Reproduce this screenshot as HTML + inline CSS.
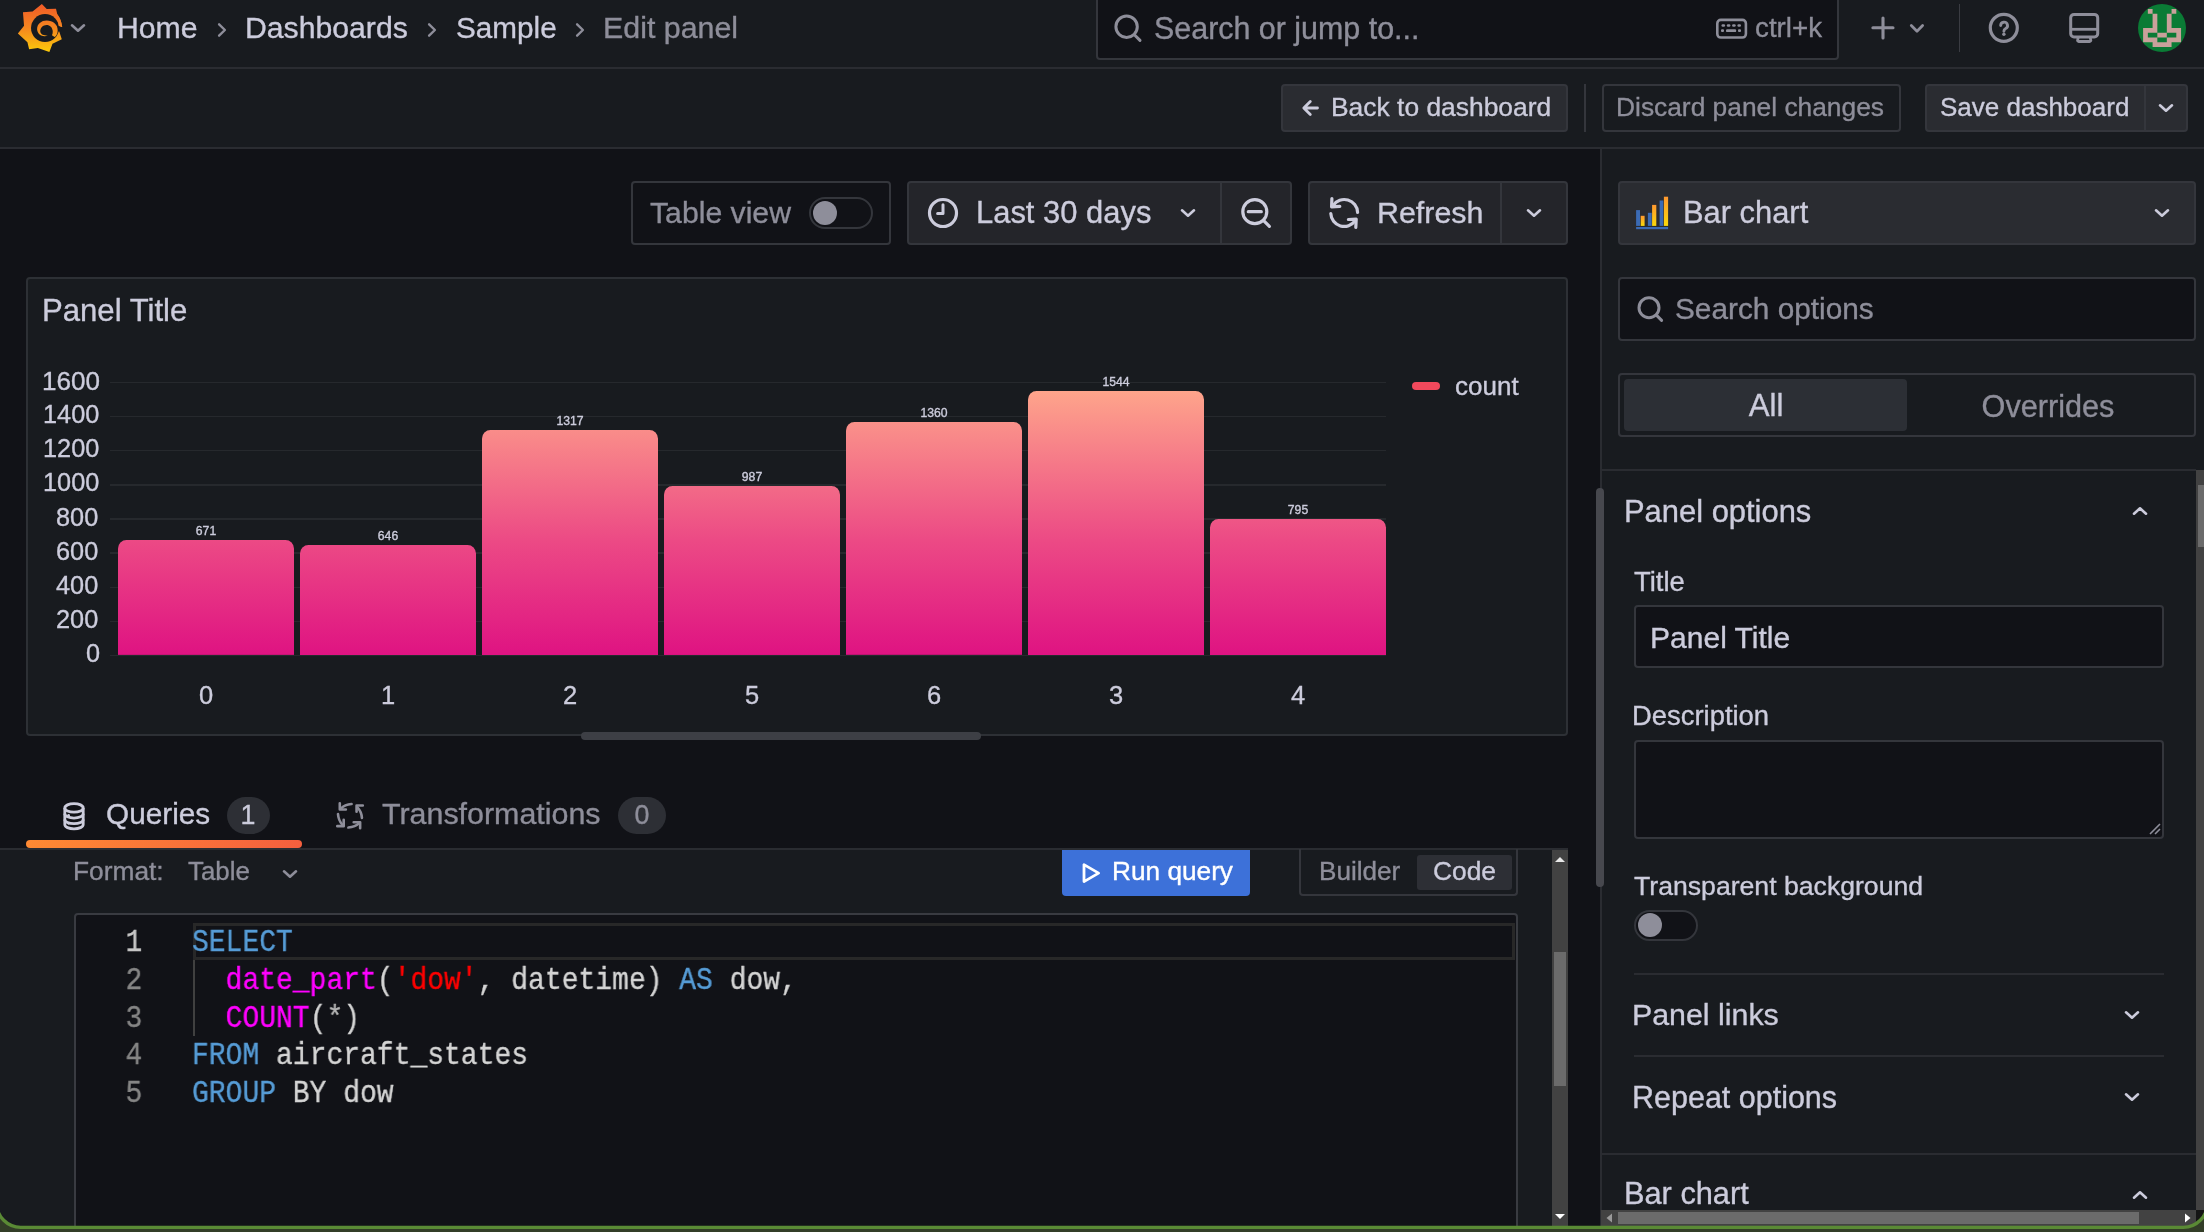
<!DOCTYPE html>
<html><head><meta charset="utf-8"><title>Edit panel - Grafana</title>
<style>
html,body{margin:0;padding:0;}
body{width:2204px;height:1232px;overflow:hidden;position:relative;background:#111217;font-family:'Liberation Sans', sans-serif;}
.a{position:absolute;box-sizing:border-box;}
.t{position:absolute;line-height:1;white-space:pre;-webkit-text-stroke:0.35px currentColor;will-change:transform;}
</style></head><body>
<div class="a" style="left:0px;top:0px;width:2204px;height:68px;background:#181b1f;"></div>
<div class="a" style="left:0px;top:66.5px;width:2204px;height:2.0px;background:#2a2c31;"></div>
<div class="a" style="left:0px;top:68.5px;width:2204px;height:79.0px;background:#181b1f;"></div>
<div class="a" style="left:0px;top:147px;width:2204px;height:2px;background:#2a2c31;"></div>
<div class="a" style="left:0px;top:149px;width:1600px;height:1077px;background:#111217;"></div>
<div class="a" style="left:1601px;top:149px;width:603px;height:1077px;background:#181b1f;"></div>
<div class="a" style="left:1600px;top:149px;width:2px;height:1077px;background:#2a2c31;"></div>
<div class="a" style="left:1096px;top:-6px;width:743px;height:66px;background:#111217;border:2px solid #34363c;border-radius:4px;"></div>
<div class="t" style="top:12.54px;font-size:30.43px;color:#8e8e9a;left:1154.00px;">Search or jump to...</div>
<div class="t" style="top:13.50px;font-size:27.76px;color:#8e8e9a;left:1755.00px;">ctrl+k</div>
<div class="t" style="top:12.72px;font-size:30.21px;color:#ccccdc;left:117.00px;">Home</div>
<div class="t" style="top:12.53px;font-size:30.20px;color:#ccccdc;left:244.60px;">Dashboards</div>
<div class="t" style="top:13.16px;font-size:29.69px;color:#ccccdc;left:455.80px;">Sample</div>
<div class="t" style="top:12.37px;font-size:30.39px;color:#8e8e9a;left:602.80px;">Edit panel</div>
<svg class="a" style="left:211.8px;top:19.9px;" width="20" height="20" viewBox="0 0 20 20"><polyline points="7.1,4.3 12.9,10 7.1,15.7" fill="none" stroke="#8e8e9a" stroke-width="2.4" stroke-linecap="round" stroke-linejoin="round"/></svg>
<svg class="a" style="left:421.8px;top:19.9px;" width="20" height="20" viewBox="0 0 20 20"><polyline points="7.1,4.3 12.9,10 7.1,15.7" fill="none" stroke="#8e8e9a" stroke-width="2.4" stroke-linecap="round" stroke-linejoin="round"/></svg>
<svg class="a" style="left:570px;top:19.9px;" width="20" height="20" viewBox="0 0 20 20"><polyline points="7.1,4.3 12.9,10 7.1,15.7" fill="none" stroke="#8e8e9a" stroke-width="2.4" stroke-linecap="round" stroke-linejoin="round"/></svg>
<svg class="a" style="left:70.0px;top:20.0px;" width="16" height="16" viewBox="0 0 16 16"><polyline points="2,5.300000000000001 8.0,10.7 14,5.300000000000001" fill="none" stroke="#8e8e9a" stroke-width="2.6" stroke-linecap="round" stroke-linejoin="round"/></svg>
<div class="a" style="left:1281px;top:84px;width:287px;height:48px;background:#2a2c31;border:2px solid #34363c;border-radius:4px;"></div>
<div class="t" style="top:94.43px;font-size:26.42px;color:#ccccdc;left:1331.00px;">Back to dashboard</div>
<div class="a" style="left:1584px;top:84px;width:2px;height:48px;background:#34363c;"></div>
<div class="a" style="left:1602px;top:84px;width:299px;height:48px;border:2px solid #34363c;border-radius:4px;"></div>
<div class="t" style="top:93.59px;font-size:26.35px;color:#8e8e9a;left:1616.00px;">Discard panel changes</div>
<div class="a" style="left:1925px;top:84px;width:263px;height:48px;background:#2a2c31;border:2px solid #34363c;border-radius:4px;"></div>
<div class="a" style="left:2144px;top:84px;width:2px;height:48px;background:#34363c;"></div>
<div class="t" style="top:93.68px;font-size:26.01px;color:#ccccdc;left:1940.00px;">Save dashboard</div>
<svg class="a" style="left:2158.0px;top:100.0px;" width="16" height="16" viewBox="0 0 16 16"><polyline points="2,5.300000000000001 8.0,10.7 14,5.300000000000001" fill="none" stroke="#ccccdc" stroke-width="2.6" stroke-linecap="round" stroke-linejoin="round"/></svg>
<div class="a" style="left:631px;top:181px;width:260px;height:64px;background:#111217;border:2px solid #34363c;border-radius:4px;"></div>
<div class="t" style="top:197.83px;font-size:30.20px;color:#8e8e9a;left:650.00px;">Table view</div>
<div class="a" style="left:809px;top:197px;width:64px;height:32px;background:#111217;border:2px solid #34363c;border-radius:16px;"></div>
<div class="a" style="left:813px;top:201px;width:24px;height:24px;background:#8e8e9a;border-radius:12px;"></div>
<div class="a" style="left:907px;top:181px;width:385px;height:64px;background:#24252a;border:2px solid #34363c;border-radius:4px;"></div>
<div class="a" style="left:1220px;top:181px;width:2px;height:64px;background:#34363c;"></div>
<div class="t" style="top:198.21px;font-size:30.93px;color:#ccccdc;left:976.00px;">Last 30 days</div>
<svg class="a" style="left:1180.0px;top:205.0px;" width="16" height="16" viewBox="0 0 16 16"><polyline points="2,5.300000000000001 8.0,10.7 14,5.300000000000001" fill="none" stroke="#ccccdc" stroke-width="2.6" stroke-linecap="round" stroke-linejoin="round"/></svg>
<div class="a" style="left:1308px;top:181px;width:260px;height:64px;background:#24252a;border:2px solid #34363c;border-radius:4px;"></div>
<div class="a" style="left:1500px;top:181px;width:2px;height:64px;background:#34363c;"></div>
<div class="t" style="top:197.46px;font-size:30.40px;color:#ccccdc;left:1377.00px;">Refresh</div>
<svg class="a" style="left:1526.0px;top:205.0px;" width="16" height="16" viewBox="0 0 16 16"><polyline points="2,5.300000000000001 8.0,10.7 14,5.300000000000001" fill="none" stroke="#ccccdc" stroke-width="2.6" stroke-linecap="round" stroke-linejoin="round"/></svg>
<div class="a" style="left:26px;top:277px;width:1542px;height:459px;background:#181b1f;border:2px solid #2d3035;border-radius:4px;"></div>
<div class="t" style="top:295.06px;font-size:31.11px;color:#ccccdc;left:42.00px;">Panel Title</div>
<div class="a" style="left:1618px;top:181px;width:578px;height:64px;background:#2a2c31;border:2px solid #34363c;border-radius:4px;"></div>
<div class="t" style="top:198.47px;font-size:30.86px;color:#ccccdc;left:1682.60px;">Bar chart</div>
<svg class="a" style="left:2154.0px;top:205.0px;" width="16" height="16" viewBox="0 0 16 16"><polyline points="2,5.300000000000001 8.0,10.7 14,5.300000000000001" fill="none" stroke="#ccccdc" stroke-width="2.6" stroke-linecap="round" stroke-linejoin="round"/></svg>
<div class="a" style="left:1618px;top:277px;width:578px;height:64px;background:#111217;border:2px solid #34363c;border-radius:4px;"></div>
<div class="t" style="top:293.78px;font-size:29.79px;color:#8e8e9a;left:1675.00px;">Search options</div>
<div class="a" style="left:1618px;top:373px;width:578px;height:64px;border:2px solid #34363c;border-radius:4px;"></div>
<div class="a" style="left:1624px;top:379px;width:283px;height:52px;background:#2c2f35;border-radius:4px;"></div>
<div class="t" style="top:389.57px;font-size:31.21px;color:#ccccdc;left:1465.50px;width:600px;text-align:center;">All</div>
<div class="t" style="top:391.04px;font-size:30.66px;color:#8e8e9a;left:1748.20px;width:600px;text-align:center;">Overrides</div>
<svg class="a" style="left:14px;top:2px;" width="52" height="52" viewBox="0 0 1232 1232"><defs><linearGradient id="lg" gradientUnits="userSpaceOnUse" x1="0" y1="50" x2="0" y2="1180"><stop offset="0" stop-color="#f05a28"/><stop offset="0.5" stop-color="#f5861f"/><stop offset="1" stop-color="#fbca0a"/></linearGradient></defs>
<path fill="url(#lg)" d="M660,48 L775,168 L995,162 L1025,290 Q1120,410 1142,595 L1072,700 L1132,882 L912,992 L838,1182 L565,1092 L358,1122 L318,952 L92,748 L238,560 L212,240 L440,224 Z"/>
<circle cx="735" cy="618" r="332" fill="#181b1f"/>
<path fill="#181b1f" d="M1050,560 L1150,600 L1140,640 L1075,705 L1030,690 Z"/>
<path fill="url(#lg)" d="M1142,595 Q1120,410 1025,290 L1000,310 Q1040,420 1060,560 Z"/>
<path fill="url(#lg)" d="M805,790 C700,850 560,780 548,660 C540,520 650,440 775,440 C920,440 1040,530 1035,680 C1032,760 1000,810 960,830 L900,790 C915,760 920,725 918,690 C912,600 850,542 770,542 C690,542 622,610 622,690 C622,760 700,810 805,790 Z"/></svg>
<svg class="a" style="left:1714px;top:16px;" width="34" height="24" viewBox="0 0 34 24"><rect x="3.3" y="3.9" width="28.6" height="17.6" rx="3.5" fill="none" stroke="#8e8e9a" stroke-width="2.6"/>
<rect x="7.5" y="8.2" width="3.6" height="2.6" rx="1.2" fill="#8e8e9a"/><rect x="12.8" y="8.2" width="3.6" height="2.6" rx="1.2" fill="#8e8e9a"/>
<rect x="18.1" y="8.2" width="3.6" height="2.6" rx="1.2" fill="#8e8e9a"/><rect x="23.4" y="8.2" width="3.6" height="2.6" rx="1.2" fill="#8e8e9a"/>
<rect x="7" y="13.3" width="3" height="2.7" rx="1" fill="#8e8e9a"/><rect x="12" y="13.2" width="10.2" height="2.9" rx="1.2" fill="#8e8e9a"/><rect x="24" y="13.3" width="3" height="2.7" rx="1" fill="#8e8e9a"/></svg>
<svg class="a" style="left:1868px;top:13px;" width="30" height="30" viewBox="0 0 30 30"><path d="M15 5 V24.9 M4.9 14.8 H25" stroke="#8e8e9a" stroke-width="3.1" stroke-linecap="round"/></svg>
<svg class="a" style="left:1906px;top:20px;" width="22" height="16" viewBox="0 0 22 16"><polyline points="5.3,5.6 11,11.2 16.6,5.6" fill="none" stroke="#8e8e9a" stroke-width="2.8" stroke-linecap="round" stroke-linejoin="round"/></svg>
<div class="a" style="left:1958.7px;top:4.3px;width:1.599999999999909px;height:47.7px;background:#3a3c42;"></div>
<svg class="a" style="left:1984px;top:8px;" width="40" height="40" viewBox="0 0 40 40"><circle cx="19.8" cy="19.8" r="13.5" fill="none" stroke="#8e8e9a" stroke-width="3.2"/>
<path d="M16.7 17.6 A3.4 3.4 0 1 1 21.4 20.7 Q19.9 21.4 19.9 23.2" fill="none" stroke="#8e8e9a" stroke-width="2.9" stroke-linecap="round"/>
<circle cx="19.9" cy="26.3" r="1.7" fill="#8e8e9a"/></svg>
<svg class="a" style="left:2064px;top:8px;" width="40" height="40" viewBox="0 0 40 40"><rect x="6.7" y="6.4" width="27" height="22.6" rx="3.3" fill="none" stroke="#8e8e9a" stroke-width="3"/>
<path d="M6.5 21.3 H33.8" stroke="#8e8e9a" stroke-width="2.8"/>
<path d="M14.4 29 L13.6 31.9 A1.2 1.2 0 0 0 14.8 33.5 H25.6 A1.2 1.2 0 0 0 26.8 31.9 L26 29" fill="none" stroke="#8e8e9a" stroke-width="2.8" stroke-linejoin="round"/></svg>
<svg class="a" style="left:2138px;top:4px;" width="48" height="48" viewBox="0 0 48 48"><circle cx="24" cy="24" r="24" fill="#0a7b35"/><path fill="#c9a19b" d="M9.845 5.100h4.745v4.745h-4.745zM33.570 5.100h4.745v4.745h-4.745zM14.590 9.845h4.745v4.745h-4.745zM28.825 9.845h4.745v4.745h-4.745zM14.590 14.590h4.745v4.745h-4.745zM28.825 14.590h4.745v4.745h-4.745zM14.590 19.335h4.745v4.745h-4.745zM28.825 19.335h4.745v4.745h-4.745zM5.100 24.080h4.745v4.745h-4.745zM9.845 24.080h4.745v4.745h-4.745zM14.590 24.080h4.745v4.745h-4.745zM28.825 24.080h4.745v4.745h-4.745zM33.570 24.080h4.745v4.745h-4.745zM38.315 24.080h4.745v4.745h-4.745zM5.100 28.825h4.745v4.745h-4.745zM19.335 28.825h4.745v4.745h-4.745zM24.080 28.825h4.745v4.745h-4.745zM38.315 28.825h4.745v4.745h-4.745zM5.100 33.570h4.745v4.745h-4.745zM9.845 33.570h4.745v4.745h-4.745zM14.590 33.570h4.745v4.745h-4.745zM28.825 33.570h4.745v4.745h-4.745zM33.570 33.570h4.745v4.745h-4.745zM38.315 33.570h4.745v4.745h-4.745zM14.590 38.315h4.745v4.745h-4.745zM19.335 38.315h4.745v4.745h-4.745zM24.080 38.315h4.745v4.745h-4.745zM28.825 38.315h4.745v4.745h-4.745z"/></svg>
<svg class="a" style="left:1110px;top:10px;" width="36" height="36" viewBox="0 0 36 36"><circle cx="16.6" cy="16.7" r="10.7" fill="none" stroke="#8e8e9a" stroke-width="3"/><path d="M24.6 25 L30 30.4" stroke="#8e8e9a" stroke-width="3" stroke-linecap="round"/></svg>
<svg class="a" style="left:1298px;top:96px;" width="26" height="24" viewBox="0 0 26 24"><path d="M19.5 12 H6.5 M12.3 5.5 L5.8 12 L12.3 18.5" fill="none" stroke="#ccccdc" stroke-width="2.8" stroke-linecap="round" stroke-linejoin="round"/></svg>
<svg class="a" style="left:923px;top:193px;" width="40" height="40" viewBox="0 0 40 40"><circle cx="20" cy="20" r="13.5" fill="none" stroke="#ccccdc" stroke-width="3.2"/><path d="M20 11.7 V20.6 H14.6" fill="none" stroke="#ccccdc" stroke-width="3" stroke-linecap="round" stroke-linejoin="round"/></svg>
<svg class="a" style="left:1235px;top:192px;" width="40" height="40" viewBox="0 0 40 40"><circle cx="19.8" cy="19.7" r="12" fill="none" stroke="#ccccdc" stroke-width="3.2"/><path d="M28.4 28.4 L34.4 34.4" stroke="#ccccdc" stroke-width="3.2" stroke-linecap="round"/><path d="M13.3 19.7 H26.3" stroke="#ccccdc" stroke-width="3.2" stroke-linecap="round"/></svg>
<svg class="a" style="left:1324px;top:193px;" width="40" height="40" viewBox="0 0 40 40"><path d="M9.2 12.3 A13.4 13.4 0 0 1 33.6 19.3" fill="none" stroke="#ccccdc" stroke-width="3.2" stroke-linecap="round"/>
<path d="M6.8 20.5 A13.4 13.4 0 0 0 31.2 27.7" fill="none" stroke="#ccccdc" stroke-width="3.2" stroke-linecap="round"/>
<path d="M7.9 5.6 L7.6 13.8 L15.8 13.4" fill="none" stroke="#ccccdc" stroke-width="3.2" stroke-linecap="round" stroke-linejoin="round"/>
<path d="M24.4 26.5 L32.2 26.1 L31.8 34.3" fill="none" stroke="#ccccdc" stroke-width="3.2" stroke-linecap="round" stroke-linejoin="round"/></svg>
<div class="a" style="left:110px;top:654.85px;width:1276px;height:1.2999999999999545px;background:#26292d;"></div>
<div class="t" style="top:640.58px;font-size:25.30px;color:#ccccdc;right:2104.20px;text-align:right;">0</div>
<div class="a" style="left:110px;top:620.725px;width:1276px;height:1.2999999999999545px;background:#26292d;"></div>
<div class="t" style="top:607.33px;font-size:25.30px;color:#ccccdc;right:2105.60px;text-align:right;">200</div>
<div class="a" style="left:110px;top:586.6px;width:1276px;height:1.2999999999999545px;background:#26292d;"></div>
<div class="t" style="top:573.08px;font-size:25.30px;color:#ccccdc;right:2105.60px;text-align:right;">400</div>
<div class="a" style="left:110px;top:552.475px;width:1276px;height:1.2999999999999545px;background:#26292d;"></div>
<div class="t" style="top:538.83px;font-size:25.30px;color:#ccccdc;right:2105.60px;text-align:right;">600</div>
<div class="a" style="left:110px;top:518.35px;width:1276px;height:1.2999999999999545px;background:#26292d;"></div>
<div class="t" style="top:504.58px;font-size:25.30px;color:#ccccdc;right:2105.60px;text-align:right;">800</div>
<div class="a" style="left:110px;top:484.225px;width:1276px;height:1.2999999999999545px;background:#26292d;"></div>
<div class="t" style="top:469.95px;font-size:25.30px;color:#ccccdc;right:2104.80px;text-align:right;">1000</div>
<div class="a" style="left:110px;top:450.1px;width:1276px;height:1.2999999999999545px;background:#26292d;"></div>
<div class="t" style="top:435.83px;font-size:25.30px;color:#ccccdc;right:2104.80px;text-align:right;">1200</div>
<div class="a" style="left:110px;top:415.975px;width:1276px;height:1.2999999999999545px;background:#26292d;"></div>
<div class="t" style="top:401.70px;font-size:25.30px;color:#ccccdc;right:2104.80px;text-align:right;">1400</div>
<div class="a" style="left:110px;top:381.85px;width:1276px;height:1.2999999999999545px;background:#26292d;"></div>
<div class="t" style="top:367.94px;font-size:26.06px;color:#ccccdc;right:2104.20px;text-align:right;">1600</div>
<div class="a" style="left:118px;top:540.4248px;width:176px;height:114.87519999999995px;border-radius:8.5px 8.5px 0 0;background:linear-gradient(to top,#df1382 0px,#ec4a85 115px,#fea48b 264px);background-size:100% 114.88px;background-position:bottom;"></div>
<div class="t" style="top:524.90px;font-size:12.20px;color:#ccccdc;left:-94.00px;width:600px;text-align:center;">671</div>
<div class="t" style="top:683.01px;font-size:25.50px;color:#ccccdc;left:-94.50px;width:600px;text-align:center;">0</div>
<div class="a" style="left:300px;top:544.7048px;width:176px;height:110.59519999999998px;border-radius:8.5px 8.5px 0 0;background:linear-gradient(to top,#df1382 0px,#ec4a85 115px,#fea48b 264px);background-size:100% 110.60px;background-position:bottom;"></div>
<div class="t" style="top:529.68px;font-size:12.20px;color:#ccccdc;left:88.00px;width:600px;text-align:center;">646</div>
<div class="t" style="top:683.01px;font-size:25.50px;color:#ccccdc;left:87.50px;width:600px;text-align:center;">1</div>
<div class="a" style="left:482px;top:429.82959999999997px;width:176px;height:225.47039999999998px;border-radius:8.5px 8.5px 0 0;background:linear-gradient(to top,#df1382 0px,#ec4a85 115px,#fea48b 264px);background-size:100% 225.47px;background-position:bottom;"></div>
<div class="t" style="top:414.93px;font-size:12.20px;color:#ccccdc;left:270.00px;width:600px;text-align:center;">1317</div>
<div class="t" style="top:683.01px;font-size:25.50px;color:#ccccdc;left:270.00px;width:600px;text-align:center;">2</div>
<div class="a" style="left:664px;top:486.32559999999995px;width:176px;height:168.9744px;border-radius:8.5px 8.5px 0 0;background:linear-gradient(to top,#df1382 0px,#ec4a85 115px,#fea48b 264px);background-size:100% 168.97px;background-position:bottom;"></div>
<div class="t" style="top:470.80px;font-size:12.20px;color:#ccccdc;left:452.00px;width:600px;text-align:center;">987</div>
<div class="t" style="top:683.01px;font-size:25.50px;color:#ccccdc;left:452.00px;width:600px;text-align:center;">5</div>
<div class="a" style="left:846px;top:422.46799999999996px;width:176px;height:232.832px;border-radius:8.5px 8.5px 0 0;background:linear-gradient(to top,#df1382 0px,#ec4a85 115px,#fea48b 264px);background-size:100% 232.83px;background-position:bottom;"></div>
<div class="t" style="top:406.94px;font-size:12.20px;color:#ccccdc;left:634.00px;width:600px;text-align:center;">1360</div>
<div class="t" style="top:683.01px;font-size:25.50px;color:#ccccdc;left:634.00px;width:600px;text-align:center;">6</div>
<div class="a" style="left:1028px;top:390.9672px;width:176px;height:264.33279999999996px;border-radius:8.5px 8.5px 0 0;background:linear-gradient(to top,#df1382 0px,#ec4a85 115px,#fea48b 264px);background-size:100% 264.33px;background-position:bottom;"></div>
<div class="t" style="top:376.20px;font-size:12.20px;color:#ccccdc;left:815.50px;width:600px;text-align:center;">1544</div>
<div class="t" style="top:683.01px;font-size:25.50px;color:#ccccdc;left:816.00px;width:600px;text-align:center;">3</div>
<div class="a" style="left:1210px;top:519.1959999999999px;width:176px;height:136.10400000000004px;border-radius:8.5px 8.5px 0 0;background:linear-gradient(to top,#df1382 0px,#ec4a85 115px,#fea48b 264px);background-size:100% 136.10px;background-position:bottom;"></div>
<div class="t" style="top:503.67px;font-size:12.20px;color:#ccccdc;left:998.00px;width:600px;text-align:center;">795</div>
<div class="t" style="top:683.01px;font-size:25.50px;color:#ccccdc;left:998.00px;width:600px;text-align:center;">4</div>
<div class="a" style="left:1412px;top:382px;width:28px;height:8px;background:#f2495c;border-radius:4px;"></div>
<div class="t" style="top:372.99px;font-size:26.00px;color:#ccccdc;left:1455.00px;">count</div>
<div class="a" style="left:581px;top:732px;width:400px;height:8px;background:#3d3f45;border-radius:4px;"></div>
<svg class="a" style="left:56px;top:794px;" width="44" height="44" viewBox="0 0 44 44"><g fill="none" stroke="#ccccdc" stroke-width="2.8">
<ellipse cx="18" cy="13.9" rx="9.2" ry="4.3"/>
<path d="M8.8 13.9 V30.6 A9.2 4.3 0 0 0 27.2 30.6 V13.9"/>
<path d="M8.8 19.8 A9.2 4.3 0 0 0 27.2 19.8"/>
<path d="M8.8 25.4 A9.2 4.3 0 0 0 27.2 25.4"/>
</g><circle cx="12.6" cy="21.4" r="1.4" fill="#ccccdc"/><circle cx="12.6" cy="29.3" r="1.4" fill="#ccccdc"/></svg>
<div class="t" style="top:798.80px;font-size:29.76px;color:#ccccdc;left:106.00px;">Queries</div>
<div class="a" style="left:227px;top:797px;width:43px;height:37px;background:#2d2f35;border-radius:18.5px;"></div>
<div class="t" style="top:801.51px;font-size:26.80px;color:#ccccdc;left:-52.50px;width:600px;text-align:center;">1</div>
<svg class="a" style="left:328px;top:794px;" width="44" height="44" viewBox="0 0 44 44"><g fill="none" stroke="#8e8e9a" stroke-width="2.6" stroke-linecap="round" stroke-linejoin="round">
<path d="M23.57 10.00 Q16.79 10.36 12.86 14.64"/><path d="M11.79 9.29 L11.79 15.54 L17.86 15.54"/>
<path d="M33.93 23.93 Q33.57 17.86 29.64 13.57"/><path d="M34.82 11.43 L28.57 11.43 L28.57 17.68"/>
<path d="M20.36 33.57 Q27.14 33.21 31.43 28.93"/><path d="M25.71 28.21 L32.14 28.21 L32.14 34.29"/>
<path d="M10.00 20.00 Q10.36 26.43 14.64 31.07"/><path d="M15.71 25.71 L15.71 32.14 L9.29 32.14"/>
</g></svg>
<div class="t" style="top:798.25px;font-size:30.41px;color:#8e8e9a;left:382.00px;">Transformations</div>
<div class="a" style="left:618px;top:797px;width:48px;height:37px;background:#2d2f35;border-radius:18.5px;"></div>
<div class="t" style="top:801.51px;font-size:26.80px;color:#8e8e9a;left:342.00px;width:600px;text-align:center;">0</div>
<div class="a" style="left:26px;top:840px;width:276px;height:8px;border-radius:4px;background:linear-gradient(90deg,#ff8a33,#f55f3e);"></div>
<div class="a" style="left:0px;top:848px;width:1568px;height:2px;background:#2a2c31;"></div>
<div class="a" style="left:0px;top:850px;width:1568px;height:376px;background:#181b1f;"></div>
<div class="t" style="top:858.11px;font-size:26.32px;color:#8e8e9a;left:73.20px;">Format:</div>
<div class="t" style="top:858.50px;font-size:25.86px;color:#8e8e9a;left:188.00px;">Table</div>
<svg class="a" style="left:282.0px;top:866.0px;" width="16" height="16" viewBox="0 0 16 16"><polyline points="2,5.300000000000001 8.0,10.7 14,5.300000000000001" fill="none" stroke="#8e8e9a" stroke-width="2.6" stroke-linecap="round" stroke-linejoin="round"/></svg>
<div class="a" style="left:1062px;top:850px;width:188px;height:45.5px;background:#3d71d9;border-radius:0 0 4px 4px;"></div>
<svg class="a" style="left:1074px;top:856px;" width="34" height="34" viewBox="0 0 34 34"><path d="M10 8.6 V25.6 L24.6 17.1 Z" fill="none" stroke="#ffffff" stroke-width="2.8" stroke-linejoin="round"/></svg>
<div class="t" style="top:858.09px;font-size:26.23px;color:#ffffff;left:1112.20px;">Run query</div>
<div class="a" style="left:1298.5px;top:849px;width:219.5px;height:46.5px;border:2px solid #34363c;border-top:none;border-radius:0 0 4px 4px;"></div>
<div class="a" style="left:1417px;top:854.5px;width:95px;height:35.0px;background:#2d2f35;border-radius:3px;"></div>
<div class="t" style="top:858.18px;font-size:26.13px;color:#8e8e9a;left:1319.20px;">Builder</div>
<div class="t" style="top:857.78px;font-size:26.36px;color:#ccccdc;left:1432.60px;">Code</div>
<div class="a" style="left:74px;top:913px;width:1444px;height:327px;background:#111217;border:2px solid #393b41;border-radius:4px;"></div>
<div class="a" style="left:192.5px;top:922.5px;width:1322.5px;height:37.5px;border:3px solid #282828;"></div>
<div class="a" style="left:192.5px;top:960px;width:2.0px;height:76px;background:#404040;"></div>
<div class="t" style="top:928.03px;font-size:30.50px;color:#c6c6c6;font-family:'Liberation Mono', monospace;right:2062.20px;text-align:right;transform:scaleX(0.918);transform-origin:100% 50%;">1</div>
<div class="t" style="top:928.03px;font-size:30.50px;color:#d4d4d4;font-family:'Liberation Mono', monospace;left:191.60px;transform:scaleX(0.918);transform-origin:0 50%;"><span style="color:#569cd6">SELECT</span></div>
<div class="t" style="top:965.78px;font-size:30.50px;color:#858585;font-family:'Liberation Mono', monospace;right:2062.20px;text-align:right;transform:scaleX(0.918);transform-origin:100% 50%;">2</div>
<div class="t" style="top:965.78px;font-size:30.50px;color:#d4d4d4;font-family:'Liberation Mono', monospace;left:191.60px;transform:scaleX(0.918);transform-origin:0 50%;">  <span style="color:#ff00ff">date_part</span><span style="color:#d4d4d4">(</span><span style="color:#ff0000">'dow'</span><span style="color:#d4d4d4">, datetime) </span><span style="color:#569cd6">AS</span><span style="color:#d4d4d4"> dow,</span></div>
<div class="t" style="top:1003.53px;font-size:30.50px;color:#858585;font-family:'Liberation Mono', monospace;right:2062.20px;text-align:right;transform:scaleX(0.918);transform-origin:100% 50%;">3</div>
<div class="t" style="top:1003.53px;font-size:30.50px;color:#d4d4d4;font-family:'Liberation Mono', monospace;left:191.60px;transform:scaleX(0.918);transform-origin:0 50%;">  <span style="color:#ff00ff">COUNT</span><span style="color:#d4d4d4">(</span><span style="color:#b4b4b4">*</span><span style="color:#d4d4d4">)</span></div>
<div class="t" style="top:1041.28px;font-size:30.50px;color:#858585;font-family:'Liberation Mono', monospace;right:2062.20px;text-align:right;transform:scaleX(0.918);transform-origin:100% 50%;">4</div>
<div class="t" style="top:1041.28px;font-size:30.50px;color:#d4d4d4;font-family:'Liberation Mono', monospace;left:191.60px;transform:scaleX(0.918);transform-origin:0 50%;"><span style="color:#569cd6">FROM</span><span style="color:#d4d4d4"> aircraft_states</span></div>
<div class="t" style="top:1079.03px;font-size:30.50px;color:#858585;font-family:'Liberation Mono', monospace;right:2062.20px;text-align:right;transform:scaleX(0.918);transform-origin:100% 50%;">5</div>
<div class="t" style="top:1079.03px;font-size:30.50px;color:#d4d4d4;font-family:'Liberation Mono', monospace;left:191.60px;transform:scaleX(0.918);transform-origin:0 50%;"><span style="color:#569cd6">GROUP</span><span style="color:#d4d4d4"> BY dow</span></div>
<div class="a" style="left:1552px;top:850px;width:16px;height:376px;background:#424242;"></div>
<div class="a" style="left:1554px;top:952px;width:12px;height:134px;background:#6b6b6b;"></div>
<svg class="a" style="left:1552px;top:852px;" width="16" height="14" viewBox="0 0 16 14"><polygon points="3,10 8,5 13,10" fill="#e8e8e8"/></svg>
<svg class="a" style="left:1552px;top:1210px;" width="16" height="14" viewBox="0 0 16 14"><polygon points="3,4 8,9 13,4" fill="#ffffff"/></svg>
<svg class="a" style="left:1626px;top:186px;" width="54" height="54" viewBox="0 0 54 54"><defs><linearGradient id="yg" x1="0" y1="0" x2="0" y2="1"><stop offset="0" stop-color="#ff9830"/><stop offset="1" stop-color="#fad90a"/></linearGradient></defs>
<rect x="10.1" y="24.1" width="3.9" height="15.8" fill="#3b6bb5"/>
<rect x="14.7" y="29.8" width="3.9" height="10.1" fill="url(#yg)"/>
<rect x="21.9" y="26.8" width="3.8" height="13.1" fill="#3b6bb5"/>
<rect x="26.1" y="18.9" width="4.2" height="21" fill="url(#yg)"/>
<rect x="33.6" y="14.5" width="3.7" height="25.4" fill="#3b6bb5"/>
<rect x="37.9" y="10.7" width="4.2" height="29.2" fill="url(#yg)"/>
<rect x="10.1" y="41" width="32" height="2.2" fill="#3b6bb5"/></svg>
<svg class="a" style="left:1630px;top:290px;" width="36" height="36" viewBox="0 0 36 36"><circle cx="19" cy="17.7" r="10" fill="none" stroke="#8e8e9a" stroke-width="3"/><path d="M26.6 25.4 L31.6 30.4" stroke="#8e8e9a" stroke-width="3" stroke-linecap="round"/></svg>
<div class="a" style="left:1601px;top:469px;width:595px;height:2px;background:#2a2c31;"></div>
<div class="a" style="left:1596px;top:488px;width:8px;height:399px;background:#47484e;border-radius:4px;"></div>
<div class="a" style="left:2196px;top:470px;width:8px;height:740px;background:#424242;"></div>
<div class="a" style="left:2198px;top:485px;width:6px;height:62px;background:#6b6b6b;"></div>
<div class="t" style="top:496.92px;font-size:30.92px;color:#ccccdc;left:1624.10px;">Panel options</div>
<svg class="a" style="left:2132.0px;top:503.0px;" width="16" height="16" viewBox="0 0 16 16"><polyline points="2,10.7 8.0,5.300000000000001 14,10.7" fill="none" stroke="#ccccdc" stroke-width="2.6" stroke-linecap="round" stroke-linejoin="round"/></svg>
<div class="t" style="top:567.78px;font-size:27.43px;color:#ccccdc;left:1634.00px;">Title</div>
<div class="a" style="left:1634px;top:605px;width:530px;height:63px;background:#111217;border:2px solid #34363c;border-radius:4px;"></div>
<div class="t" style="top:622.96px;font-size:30.04px;color:#ccccdc;left:1649.90px;">Panel Title</div>
<div class="t" style="top:702.09px;font-size:27.41px;color:#ccccdc;left:1632.00px;">Description</div>
<div class="a" style="left:1634px;top:739.5px;width:530px;height:99.0px;background:#111217;border:2px solid #34363c;border-radius:4px;"></div>
<svg class="a" style="left:2148px;top:822px;" width="14" height="14" viewBox="0 0 14 14"><path d="M2 12 L12 2 M7 12 L12 7" stroke="#8e8e9a" stroke-width="1.6"/></svg>
<div class="t" style="top:873.44px;font-size:26.64px;color:#ccccdc;left:1633.60px;">Transparent background</div>
<div class="a" style="left:1634px;top:909.5px;width:64px;height:31.5px;background:#111217;border:2px solid #34363c;border-radius:16px;"></div>
<div class="a" style="left:1638px;top:913px;width:24px;height:24px;background:#8e8e9a;border-radius:12px;"></div>
<div class="a" style="left:1634px;top:973px;width:530px;height:2px;background:#2a2c31;"></div>
<div class="t" style="top:999.50px;font-size:30.35px;color:#ccccdc;left:1631.90px;">Panel links</div>
<svg class="a" style="left:2124.0px;top:1006.5px;" width="16" height="16" viewBox="0 0 16 16"><polyline points="2,5.300000000000001 8.0,10.7 14,5.300000000000001" fill="none" stroke="#ccccdc" stroke-width="2.6" stroke-linecap="round" stroke-linejoin="round"/></svg>
<div class="a" style="left:1634px;top:1054.5px;width:530px;height:2.0px;background:#2a2c31;"></div>
<div class="t" style="top:1081.58px;font-size:30.49px;color:#ccccdc;left:1631.60px;">Repeat options</div>
<svg class="a" style="left:2124.0px;top:1088.5px;" width="16" height="16" viewBox="0 0 16 16"><polyline points="2,5.300000000000001 8.0,10.7 14,5.300000000000001" fill="none" stroke="#ccccdc" stroke-width="2.6" stroke-linecap="round" stroke-linejoin="round"/></svg>
<div class="a" style="left:1601px;top:1153px;width:595px;height:2px;background:#2a2c31;"></div>
<div class="t" style="top:1178.96px;font-size:30.76px;color:#ccccdc;left:1623.60px;">Bar chart</div>
<svg class="a" style="left:2132.0px;top:1187.0px;" width="16" height="16" viewBox="0 0 16 16"><polyline points="2,10.7 8.0,5.300000000000001 14,10.7" fill="none" stroke="#ccccdc" stroke-width="2.6" stroke-linecap="round" stroke-linejoin="round"/></svg>
<div class="a" style="left:1601px;top:1210px;width:595px;height:16px;background:#424242;"></div>
<div class="a" style="left:1618px;top:1212px;width:521px;height:12px;background:#6b6b6b;"></div>
<svg class="a" style="left:1601px;top:1210px;" width="16" height="16" viewBox="0 0 16 16"><polygon points="11,3.5 5.5,8 11,12.5" fill="#9a9a9a"/></svg>
<svg class="a" style="left:2180px;top:1210px;" width="16" height="16" viewBox="0 0 16 16"><polygon points="5,3.5 10.5,8 5,12.5" fill="#ffffff"/></svg>
<div class="a" style="left:2196px;top:1210px;width:8px;height:16px;background:#151515;"></div>
<svg class="a" style="left:0px;top:1180px;" width="2204" height="52" viewBox="0 0 2204 52"><path fill-rule="evenodd" fill="#323d27" d="M-10 -10 H2214 V62 H-10 Z M-3.3 -100 H2207.3 V23.3 A24 24 0 0 1 2183.3 47.3 H20.7 A24 24 0 0 1 -3.3 23.3 Z"/><path fill="none" stroke="#5a8a35" stroke-width="3.3" d="M-3.3 -100 V23.3 A24 24 0 0 0 20.7 47.3 H2183.3 A24 24 0 0 0 2207.3 23.3 V-100"/></svg>
</body></html>
